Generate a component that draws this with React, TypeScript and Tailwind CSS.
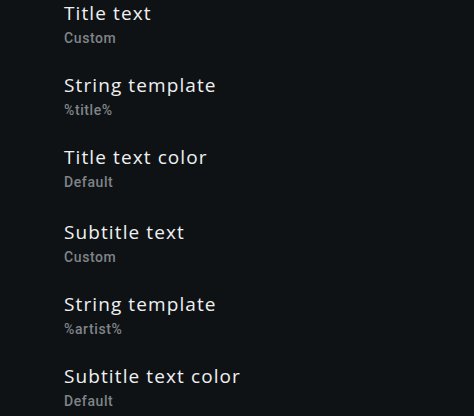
import React from 'react';

type Item = { title: string; value: string; extra?: boolean };

const items: Item[] = [
  { title: 'Title text', value: 'Custom' },
  { title: 'String template', value: '%title%' },
  { title: 'Title text color', value: 'Default', extra: true },
  { title: 'Subtitle text', value: 'Custom' },
  { title: 'String template', value: '%artist%' },
  { title: 'Subtitle text color', value: 'Default' },
];

export default function App() {
  return (
    <div className="w-[474px] h-[416px] overflow-hidden bg-[#0e1215] pt-px">
      {items.map((item, i) => (
        <div key={i} className={`pl-16 ${item.extra ? 'h-[75px]' : 'h-[72px]'}`}>
          <div className="h-6 leading-6 text-[19px] text-[#eef0f1] font-['Open_Sans',sans-serif] tracking-[1.1px]">
            {item.title}
          </div>
          <div className="mt-[3px] leading-5 text-[14px] font-medium text-[#7f8488] font-['Roboto',sans-serif] tracking-[0.6px]">
            {item.value}
          </div>
        </div>
      ))}
    </div>
  );
}
